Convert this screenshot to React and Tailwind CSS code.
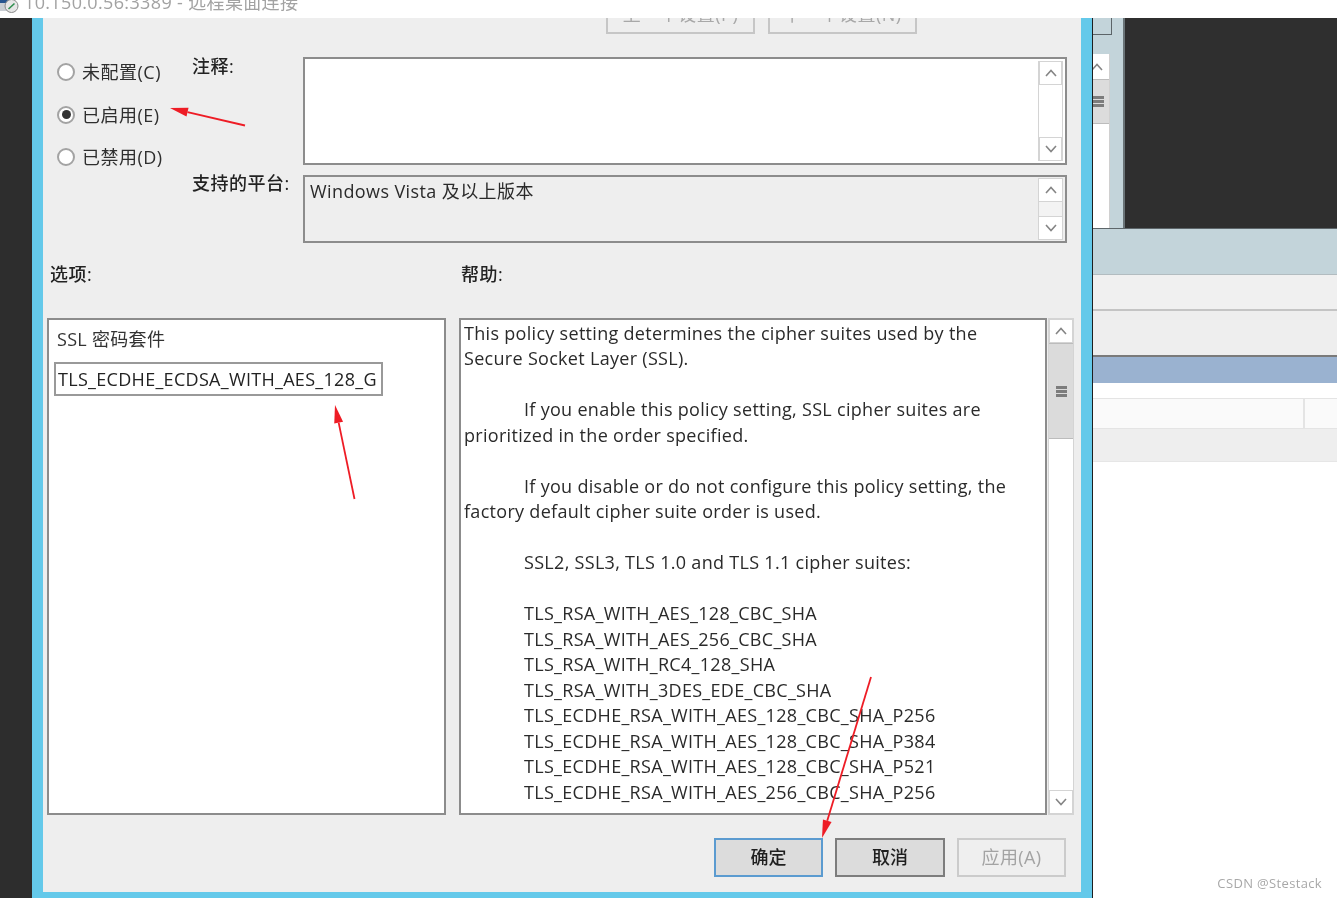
const FONT = "font-['Open_Sans','Noto_Sans_CJK_SC',sans-serif]";

function Chevron({ up, className = "" }) {
  return (
    <svg width="14" height="10" viewBox="0 0 14 10" className={className} fill="none" stroke="#858585" strokeWidth="1.6">
      <path d={up ? "M2 8 L7 2.5 L12 8" : "M2 2 L7 7.5 L12 2"} />
    </svg>
  );
}

function ScrollBtn({ up }) {
  return (
    <div className="h-[24px] shrink-0 flex items-center justify-center bg-white border border-[#d4d4d4]">
      <Chevron up={up} />
    </div>
  );
}

function Grip() {
  return (
    <div className="flex flex-col gap-[1px] w-[11px]">
      <div className="h-[3px] bg-[#7c7c7c]" />
      <div className="h-[3px] bg-[#7c7c7c]" />
      <div className="h-[3px] bg-[#7c7c7c]" />
    </div>
  );
}

function Radio({ checked, label }) {
  return (
    <div className="h-[30px] flex items-center">
      <div className="w-[18px] h-[18px] rounded-full bg-white border-2 border-[#a3a3a3] flex items-center justify-center">
        {checked && <div className="w-[9px] h-[9px] rounded-full bg-[#333333]" />}
      </div>
      <span className="ml-[7px] text-[18px] leading-[24px] tracking-[0.5px] text-[#2e2e2e] whitespace-nowrap">{label}</span>
    </div>
  );
}

const HELP = [
  "This policy setting determines the cipher suites used by the",
  "Secure Socket Layer (SSL).",
  "",
  "\tIf you enable this policy setting, SSL cipher suites are",
  "prioritized in the order specified.",
  "",
  "\tIf you disable or do not configure this policy setting, the",
  "factory default cipher suite order is used.",
  "",
  "\tSSL2, SSL3, TLS 1.0 and TLS 1.1 cipher suites:",
  "",
  "\tTLS_RSA_WITH_AES_128_CBC_SHA",
  "\tTLS_RSA_WITH_AES_256_CBC_SHA",
  "\tTLS_RSA_WITH_RC4_128_SHA",
  "\tTLS_RSA_WITH_3DES_EDE_CBC_SHA",
  "\tTLS_ECDHE_RSA_WITH_AES_128_CBC_SHA_P256",
  "\tTLS_ECDHE_RSA_WITH_AES_128_CBC_SHA_P384",
  "\tTLS_ECDHE_RSA_WITH_AES_128_CBC_SHA_P521",
  "\tTLS_ECDHE_RSA_WITH_AES_256_CBC_SHA_P256",
];

function HelpLine({ text }) {
  const indented = text.startsWith("\t");
  return (
    <div className={`h-[25.5px] leading-[25.5px] whitespace-nowrap ${indented ? "pl-[60px]" : ""}`}>
      {indented ? text.slice(1) : text}
    </div>
  );
}

function Arrow({ x1, y1, x2, y2 }) {
  const dx = x2 - x1;
  const dy = y2 - y1;
  const len = Math.hypot(dx, dy);
  const ux = dx / len;
  const uy = dy / len;
  const bx = x2 - ux * 18;
  const by = y2 - uy * 18;
  const px = -uy * 4.5;
  const py = ux * 4.5;
  return (
    <g>
      <line x1={x1} y1={y1} x2={bx} y2={by} stroke="#ee1c25" strokeWidth="1.8" />
      <polygon points={`${x2},${y2} ${bx + px},${by + py} ${bx - px},${by - py}`} fill="#ee1c25" />
    </g>
  );
}

export default function App() {
  return (
    <div className={`relative w-[1337px] h-[898px] overflow-hidden flex flex-col bg-white blur-[0.35px] ${FONT}`}>
      {/* clipped remote desktop title bar */}
      <div className="h-[18px] shrink-0 bg-white overflow-hidden flex items-start">
        <svg width="19" height="14" viewBox="0 0 19 14" className="shrink-0">
          <rect x="0" y="0" width="9" height="3" fill="#27558f" />
          <rect x="0" y="3" width="8" height="8" fill="#c9ced4" />
          <circle cx="11.5" cy="6" r="6.5" fill="#e6e6e6" stroke="#8a8a8a" />
          <path d="M8.5 9 L14.5 3.5" stroke="#2f8f4e" strokeWidth="1.6" />
        </svg>
        <span className="ml-[5px] -mt-[10px] text-[18px] leading-[24px] tracking-[0.35px] text-[#a2a2a2] whitespace-nowrap">
          10.150.0.56:3389 - 远程桌面连接
        </span>
      </div>

      <div className="flex-1 flex min-h-0">
        <div className="w-[32px] bg-[#2d2d2d]" />

        {/* dialog window with its blue frame */}
        <div className="w-[1060px] bg-[#64c9ea] px-[11px] pb-[6px]">
          <div className="h-full bg-[#eeeeee] flex flex-col">
            {/* previous / next buttons, clipped by the top of the remote view */}
            <div className="h-[16px] shrink-0 overflow-hidden flex justify-start pl-[563px] gap-[13px]">
              {["上一个设置(P)", "下一个设置(N)"].map((t) => (
                <div
                  key={t}
                  className="w-[149px] h-[40px] -mt-[24px] shrink-0 border-2 border-[#c6c6c6] flex items-center justify-center text-[18px] tracking-[0.5px] text-[#a8a8a8]"
                >
                  {t}
                </div>
              ))}
            </div>

            {/* state + comment + platform */}
            <div className="flex mt-[23px] shrink-0">
              <div className="w-[149px] pl-[14px] flex flex-col gap-[12.5px]">
                <Radio label="未配置(C)" />
                <Radio checked label="已启用(E)" />
                <Radio label="已禁用(D)" />
              </div>
              <div className="w-[111px] flex flex-col text-[18px] leading-[24px] tracking-[0.5px] text-[#222222] font-medium">
                <div className="-mt-[3px]">注释:</div>
                <div className="mt-[93px] whitespace-nowrap">支持的平台:</div>
              </div>
              <div className="w-[764px] flex flex-col gap-[10px]">
                <div className="h-[108px] bg-white border-2 border-[#8c8c8c] flex justify-end pr-[2px] py-[2px]">
                  <div className="w-[25px] flex flex-col bg-white border-x border-[#d4d4d4]">
                    <ScrollBtn up />
                    <div className="flex-1" />
                    <ScrollBtn />
                  </div>
                </div>
                <div className="h-[68px] bg-[#eeeeee] border-2 border-[#8c8c8c] flex pr-[2px] py-[1px]">
                  <div className="flex-1 pl-[5px] pt-[1px] text-[18px] leading-[24px] tracking-[0.4px] text-[#2a2a2a] whitespace-nowrap">
                    Windows Vista 及以上版本
                  </div>
                  <div className="w-[25px] flex flex-col">
                    <ScrollBtn up />
                    <div className="flex-1 bg-[#f3f3f3] border-x border-[#d4d4d4]" />
                    <ScrollBtn />
                  </div>
                </div>
              </div>
            </div>

            {/* section labels */}
            <div className="flex mt-[19px] h-[24px] shrink-0 text-[18px] leading-[24px] tracking-[0.5px] text-[#222222] font-medium">
              <div className="w-[418px] pl-[7px]">选项:</div>
              <div>帮助:</div>
            </div>

            {/* options + help panes */}
            <div className="flex mt-[32px] h-[497px] shrink-0 pl-[4px]">
              <div className="w-[399px] bg-white border-2 border-[#8c8c8c] pl-[5px]">
                <div className="pl-[3px] mt-[7px] text-[18px] leading-[24px] tracking-[0.3px] text-[#333333] whitespace-nowrap">SSL 密码套件</div>
                <div className="w-[329px] h-[34px] mt-[11px] border-2 border-[#999999] pl-[2px] flex items-center text-[18px] tracking-[0.3px] text-[#222222] whitespace-nowrap overflow-hidden">
                  TLS_ECDHE_ECDSA_WITH_AES_128_G
                </div>
              </div>
              <div className="w-[588px] ml-[13px] bg-white border-2 border-[#8c8c8c] pl-[3px] pt-[0.5px] text-[18px] tracking-[0.3px] text-[#2a2a2a] overflow-hidden">
                {HELP.map((l, i) => (
                  <HelpLine key={i} text={l} />
                ))}
              </div>
              <div className="w-[26px] ml-[1px] flex flex-col bg-white border border-[#d4d4d4]">
                <ScrollBtn up />
                <div className="h-[96px] shrink-0 bg-[#dbdbdb] border-y border-[#bcbcbc] flex items-center justify-center">
                  <Grip />
                </div>
                <div className="flex-1" />
                <ScrollBtn />
              </div>
            </div>

            {/* dialog buttons */}
            <div className="flex mt-[23px] pl-[671px] gap-[12px] shrink-0 text-[18px] leading-[24px]">
              <div className="w-[109px] h-[39px] bg-[#dcdcdc] border-2 border-[#5b9bd0] flex items-center justify-center pb-[1px] text-[#1f1f1f] font-medium">确定</div>
              <div className="w-[110px] h-[39px] bg-[#dcdcdc] border-2 border-[#7d7d7d] flex items-center justify-center pb-[1px] text-[#1f1f1f] font-medium">取消</div>
              <div className="w-[109px] h-[39px] bg-[#efefef] border-2 border-[#cbcbcb] flex items-center justify-center pb-[1px] tracking-[0.4px] text-[#a3a3a3]">应用(A)</div>
            </div>
          </div>
        </div>

        <div className="w-px bg-[#1f1f1f]" />

        {/* background windows on the right */}
        <div className="flex-1 flex flex-col min-w-0">
          <div className="h-[210px] shrink-0 flex">
            <div className="w-[32px] bg-[#c3d4da] border-r-2 border-[#6a7478] flex flex-col">
              <div className="w-[19px] h-[17px] border-r border-b border-[#5c6468]" />
              <div className="w-[17px] mt-[19px] flex-1 bg-white flex flex-col border-r border-[#d0d0d0]">
                <div className="h-[25px] flex items-center justify-start overflow-hidden">
                  <Chevron up className="-ml-[3px] shrink-0" />
                </div>
                <div className="h-[45px] bg-[#dcdcdc] border-y border-[#bcbcbc] flex items-center">
                  <Grip />
                </div>
              </div>
            </div>
            <div className="flex-1 bg-[#2f2f2f]" />
          </div>
          <div className="h-[47px] shrink-0 bg-[#c3d4da] border-y border-t-[#5d666a] border-b-[#b2bcc0]" />
          <div className="h-[36px] shrink-0 bg-[#f0f0f0] border-b-2 border-[#c4c4c4]" />
          <div className="h-[46px] shrink-0 bg-[#eeeeee] border-b-2 border-[#7a7a7a]" />
          <div className="h-[26px] shrink-0 bg-[#9ab2d0]" />
          <div className="h-[15px] shrink-0 bg-white" />
          <div className="h-[31px] shrink-0 bg-[#fafafa] border-y border-[#e4e4e4] flex">
            <div className="w-[212px] border-r-2 border-[#e4e4e4]" />
          </div>
          <div className="h-[33px] shrink-0 bg-[#eeeeee] border-b border-[#e6e6e6]" />
          <div className="flex-1 bg-white flex items-end justify-end pr-[15px] pb-[6px]">
            <span className="text-[13px] leading-[18px] tracking-[0.35px] text-[#a8a8a8] whitespace-nowrap">CSDN @Stestack</span>
          </div>
        </div>
      </div>

      {/* red annotation arrows drawn over the screenshot */}
      <svg className="absolute inset-0 pointer-events-none" width="1337" height="898" viewBox="0 0 1337 898">
        <Arrow x1={245} y1={125.5} x2={170} y2={108} />
        <Arrow x1={354.5} y1={499} x2={335} y2={405} />
        <Arrow x1={871} y1={677} x2={822} y2={838} />
      </svg>
    </div>
  );
}
